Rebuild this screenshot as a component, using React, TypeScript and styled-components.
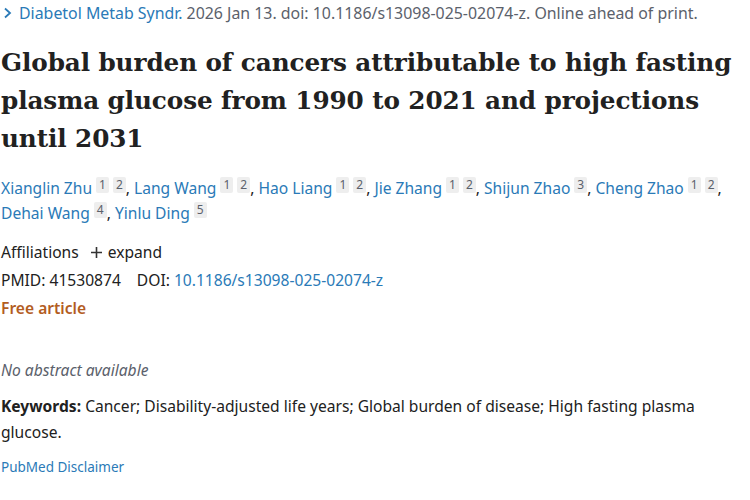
import React from "react";
import styled, { createGlobalStyle } from "styled-components";

const Global = createGlobalStyle`
  html, body { margin: 0; padding: 0; background: #fff; }
  body { font-family: "Noto Sans", "Open Sans", sans-serif; color: #212121; }
`;

const Page = styled.main`
  width: 738px;
  padding: 2px 0 0 1px;
  box-sizing: border-box;
`;

const Citation = styled.div`
  font-size: 15.9px;
  line-height: 22px;
  color: #5b616b;
  white-space: nowrap;
`;

const JournalLink = styled.a`
  display: inline-flex;
  align-items: center;
  gap: 7px;
  color: #2a7ab7;
  text-decoration: none;
  margin-right: 4px;
  padding-left: 2px;
`;

const Title = styled.h1`
  font-family: "DejaVu Serif", serif;
  font-weight: 700;
  font-size: 24.7px;
  line-height: 38px;
  color: #212121;
  margin: 20px 0 0 0;
  letter-spacing: -0.1px;
`;

const Authors = styled.div`
  margin-top: 18px;
  font-size: 15.6px;
  line-height: 25px;
`;

const AuthorLink = styled.a`
  color: #2a7ab7;
  text-decoration: none;
`;

const Sup = styled.span`
  display: inline-block;
  font-size: 12px;
  line-height: 16px;
  color: #5b616b;
  background: #eeeeee;
  border-radius: 2px;
  padding: 0 3px;
  margin-left: 4px;
  vertical-align: 5px;
`;

const Row = styled.div<{ $top?: number }>`
  font-size: 15.6px;
  line-height: 28px;
  display: flex;
  align-items: center;
  margin-top: ${(p) => p.$top ?? 0}px;
`;

const Expand = styled.span`
  display: inline-flex;
  align-items: center;
  gap: 5px;
  margin-left: 11px;
`;

const Label = styled.span`
  margin-right: 16px;
`;

const DoiLink = styled.a`
  color: #2a7ab7;
  text-decoration: none;
  margin-left: 4px;
`;

const Free = styled.div`
  font-size: 15.6px;
  line-height: 28px;
  font-weight: 600;
  color: #b35d1f;
`;

const NoAbstract = styled.div`
  margin-top: 34px;
  font-size: 15.6px;
  line-height: 28px;
  font-style: italic;
  color: #5b616b;
`;

const Keywords = styled.p`
  margin: 9px 0 0 0;
  font-size: 15.6px;
  line-height: 26px;
  strong { font-weight: 700; }
`;

const Disclaimer = styled.a`
  display: block;
  margin-top: 11px;
  font-size: 13.5px;
  line-height: 22px;
  color: #2a7ab7;
  text-decoration: none;
`;

const authors: { name: string; sups: string[] }[] = [
  { name: "Xianglin Zhu", sups: ["1", "2"] },
  { name: "Lang Wang", sups: ["1", "2"] },
  { name: "Hao Liang", sups: ["1", "2"] },
  { name: "Jie Zhang", sups: ["1", "2"] },
  { name: "Shijun Zhao", sups: ["3"] },
  { name: "Cheng Zhao", sups: ["1", "2"] },
  { name: "Dehai Wang", sups: ["4"] },
  { name: "Yinlu Ding", sups: ["5"] },
];

export default function App() {
  return (
    <>
      <Global />
      <Page>
        <Citation>
          <JournalLink href="#">
            <svg width="9" height="12" viewBox="0 0 9 12">
              <path d="M2 1.5 L7 6 L2 10.5" fill="none" stroke="#2a7ab7" strokeWidth="1.8" />
            </svg>
            Diabetol Metab Syndr.
          </JournalLink>
          2026 Jan 13. doi: 10.1186/s13098-025-02074-z. Online ahead of print.
        </Citation>
        <Title>
          Global burden of cancers attributable to high fasting plasma glucose from 1990 to 2021 and projections until 2031
        </Title>
        <Authors>
          {authors.map((a, i) => (
            <React.Fragment key={a.name}>
              <AuthorLink href="#">{a.name}</AuthorLink>
              {a.sups.map((s) => (
                <Sup key={s}>{s}</Sup>
              ))}
              {i < authors.length - 1 ? ", " : ""}
            </React.Fragment>
          ))}
        </Authors>
        <Row $top={12}>
          Affiliations
          <Expand>
            <svg width="13" height="13" viewBox="0 0 13 13">
              <path d="M6.5 1 V12 M1 6.5 H12" stroke="#333" strokeWidth="1.6" />
            </svg>
            expand
          </Expand>
        </Row>
        <Row>
          <Label>PMID: 41530874</Label>
          DOI:<DoiLink href="#">10.1186/s13098-025-02074-z</DoiLink>
        </Row>
        <Free>Free article</Free>
        <NoAbstract>No abstract available</NoAbstract>
        <Keywords>
          <strong>Keywords:</strong> Cancer; Disability-adjusted life years; Global burden of disease; High fasting plasma glucose.
        </Keywords>
        <Disclaimer href="#">PubMed Disclaimer</Disclaimer>
      </Page>
    </>
  );
}
